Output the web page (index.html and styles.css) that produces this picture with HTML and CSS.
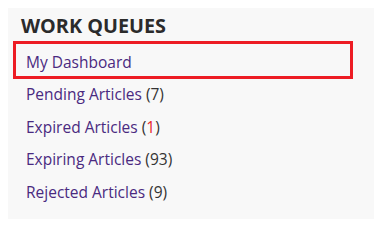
FILE: index.html
```html
<!DOCTYPE html>
<html>

<head>
    <meta charset='utf-8'>
    <title>Work Queues</title>
    <meta name='viewport' content='width=device-width, initial-scale=1'>
    <link rel="stylesheet" href="styles.css">
</head>

<body>
    <div class="panel">
        <h2 class="panelTitle">WORK QUEUES</h2>
        <ul class="queueList">
            <li class="queue active"><a href="#">My Dashboard</a></li>
            <li class="queue"><a href="#">Pending Articles</a> <span class="count">(7)</span></li>
            <li class="queue"><a href="#">Expired Articles</a> <span class="count">(<span class="alert">1</span>)</span></li>
            <li class="queue"><a href="#">Expiring Articles</a> <span class="count">(93)</span></li>
            <li class="queue"><a href="#">Rejected Articles</a> <span class="count">(9)</span></li>
        </ul>
    </div>
</body>

</html>
```

FILE: styles.css
```css
body {
    background: white;
    font-family: "Open Sans", "Liberation Sans", sans-serif;
    margin: 8px;
}

a {
    color: #4a2a80;
    text-decoration: none;
}

.alert {
    color: #e8232a;
}

.count {
    color: #333;
}

.panel {
    background: #f8f8f8;
    box-shadow: 0 2px 7px rgba(0, 0, 0, 0.3);
    box-sizing: border-box;
    height: 211px;
    padding-top: 4px;
}

.panelTitle {
    color: #2b2b2b;
    font-size: 19.8px;
    font-weight: 700;
    line-height: 27px;
    margin: 0 0 2px;
    padding-left: 13px;
}

.queue {
    font-size: 15.5px;
    height: 32.5px;
    line-height: 32.5px;
    padding-left: 13px;
}

.queue.active {
    border: 3px solid #ed1c24;
    box-sizing: border-box;
    height: 38px;
    line-height: 28px;
    margin-bottom: -1px;
    padding-left: 10px;
    padding-top: 4px;
}

.queueList {
    list-style: none;
    margin: 0 21px 0 5px;
    padding: 0;
}
```
